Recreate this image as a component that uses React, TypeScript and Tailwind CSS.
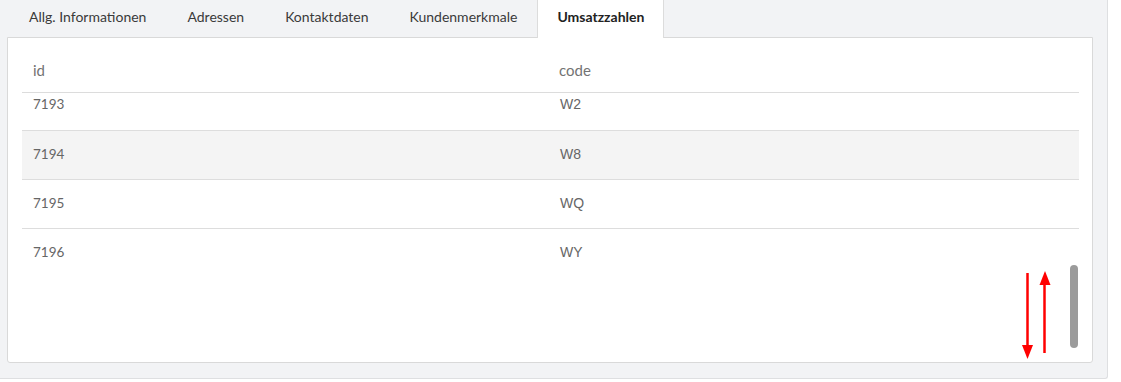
import React from "react";

const tabs = ["Allg. Informationen", "Adressen", "Kontaktdaten", "Kundenmerkmale", "Umsatzzahlen"];
const rows = [
  { id: "7193", code: "W2" },
  { id: "7194", code: "W8" },
  { id: "7195", code: "WQ" },
  { id: "7196", code: "WY" },
];

export default function App() {
  return (
    <div className="w-[1121px] h-[382px] bg-white" style={{ fontFamily: "Lato, 'Noto Sans', sans-serif" }}>
      <div className="w-[1108px] h-[379px] bg-[#f2f3f5] border-r border-b border-[#dedfe1] rounded-br-[3px] pl-[7px] pr-[14px] relative">
        {/* tabs */}
        <div className="flex h-[37px] pl-px">
          {tabs.map((t, i) => {
            const active = i === tabs.length - 1;
            return (
              <div
                key={t}
                className={
                  active
                    ? "relative z-10 h-[38px] px-[19px] pt-[7px] text-[14px] leading-[20px] font-bold text-[#222] bg-white border-x border-[#dcdcdc]"
                    : "h-[37px] pl-[21px] pr-[20px] pt-[7px] text-[14px] leading-[20px] text-[#3a3a3a]"
                }
              >
                {t}
              </div>
            );
          })}
        </div>
        {/* panel */}
        <div className="relative h-[326px] bg-white border border-[#d9d9d9] rounded-b-[3px] pl-[14px] pr-[13px]">
          <div className="flex h-[55px] pt-[21px] border-b border-[#dcdcdc] text-[15px] leading-[22px] text-[#737373]">
            <div className="w-[527px] pl-[11px]">id</div>
            <div className="flex-1 pl-[10px]">code</div>
          </div>
          <div className="h-[269px] overflow-hidden">
            <div className="-mt-[12px]">
              {rows.map((r, i) => (
                <div
                  key={r.id}
                  className={
                    "flex h-[49px] pt-[13px] leading-[20px] text-[#666] " +
                    (i > 0 ? "border-t border-[#dddddd] " : "") +
                    (i === 1 ? "bg-[#f4f4f4]" : "bg-white")
                  }
                >
                  <div className="w-[527px] pl-[11px] text-[13.5px]">{r.id}</div>
                  <div className="flex-1 pl-[11px] text-[14px]" style={{ fontFamily: "'Liberation Sans', Arial, sans-serif" }}>
                    {r.code}
                  </div>
                </div>
              ))}
            </div>
          </div>
          {/* scrollbar */}
          <div className="absolute right-[14px] top-[227px] w-[8px] h-[83px] rounded-full bg-[#9b9b9b]" />
        </div>
        {/* red arrows */}
        <svg className="absolute left-[1015px] top-[265px]" width="45" height="100" viewBox="0 0 45 100">
          <line x1="12.5" y1="8" x2="12.5" y2="82" stroke="#ff0000" strokeWidth="2.5" />
          <polygon points="7,80 18,80 12.5,94" fill="#ff0000" />
          <line x1="29.5" y1="88" x2="29.5" y2="16" stroke="#ff0000" strokeWidth="2.5" />
          <polygon points="24.5,20 35.5,20 30,6" fill="#ff0000" />
        </svg>
      </div>
    </div>
  );
}
